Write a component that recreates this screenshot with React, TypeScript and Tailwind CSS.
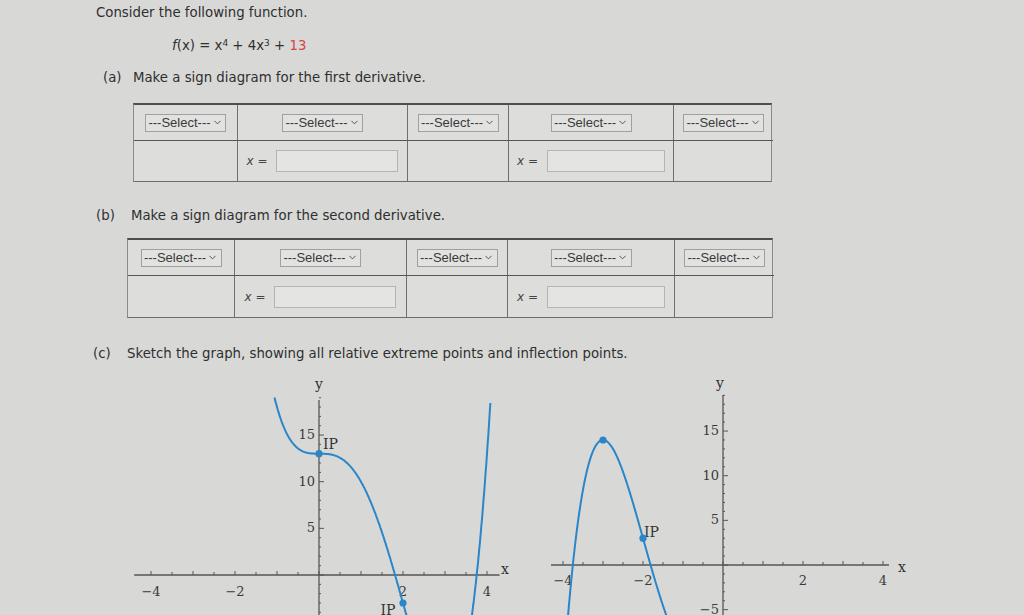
import { ChevronDown } from 'lucide-react';

const BLUE = '#2a86c8';

function Select() {
  return (
    <div className="flex h-[18px] w-[81px] items-center justify-center gap-[1px] border border-[#a0a0a0] bg-[#e2e2e0] font-['Liberation_Sans',Arial,sans-serif] text-[13px] leading-none text-[#3a3a3a]">
      <span>---Select---</span>
      <ChevronDown className="h-[11px] w-[11px]" strokeWidth={1.8} />
    </div>
  );
}

function XInput({ width }: { width: string }) {
  return (
    <div className="flex items-center gap-[9px] text-[12px] text-[#444]">
      <span>
        <span className="italic">x</span> =
      </span>
      <div className={`h-[22px] border border-[#b4b4b4] bg-[#e4e4e2] ${width}`} />
    </div>
  );
}

function SignTable({ grid, rowTwo }: { grid: string; rowTwo: string }) {
  const cells = [0, 1, 2, 3, 4];
  return (
    <div className={`grid border-t-2 border-b border-l border-r border-t-[#4d4d4d] border-b-[#6d6d6d] border-l-[#8a8a8a] border-r-[#8a8a8a] bg-[#dddedc] ${grid}`}>
      {cells.map((i) => (
        <div
          key={'a' + i}
          className={`flex h-[36px] items-center justify-center border-b border-b-[#555] ${i < 4 ? 'border-r border-r-[#6f6f6f]' : ''}`}
        >
          <Select />
        </div>
      ))}
      {cells.map((i) => (
        <div
          key={'b' + i}
          className={`flex items-center justify-center ${rowTwo} ${i < 4 ? 'border-r border-r-[#6f6f6f]' : ''}`}
        >
          {(i === 1 || i === 3) && <XInput width={i === 1 ? 'w-[122px]' : 'w-[118px]'} />}
        </div>
      ))}
    </div>
  );
}

function curve(fn: (x: number) => number, a: number, b: number, x0: number, y0: number, sx: number, sy: number) {
  const pts: string[] = [];
  for (let x = a; x <= b + 1e-9; x += 0.01) {
    pts.push(`${(x0 + x * sx).toFixed(1)},${(y0 - fn(x) * sy).toFixed(1)}`);
  }
  return 'M' + pts.join(' L');
}

function Axes({
  x0, y0, sx, sy, xFrom, xTo, yTop, yFrom, yLabels, xLabels, xLabelY,
}: {
  x0: number; y0: number; sx: number; sy: number; xFrom: number; xTo: number; yTop: number;
  yFrom: number; yLabels: number[]; xLabels: number[]; xLabelY: number;
}) {
  const xt: number[] = [];
  for (let v = Math.ceil(xFrom * 2) / 2; v <= xTo; v += 0.5) xt.push(v);
  const yt: number[] = [];
  for (let v = yFrom; v <= 19; v += 1) yt.push(v);
  return (
    <g stroke="#555" strokeWidth={1}>
      <line x1={x0 + xFrom * sx} y1={y0} x2={x0 + xTo * sx} y2={y0} strokeWidth={1.3} />
      <line x1={x0} y1={yTop} x2={x0} y2={270} strokeWidth={1.3} />
      {xt.map((v) => (
        <line key={'x' + v} x1={x0 + v * sx} y1={y0 - (Number.isInteger(v) ? 4 : 3)} x2={x0 + v * sx} y2={y0} />
      ))}
      {yt.map((v) => (
        <line key={'y' + v} x1={x0} y1={y0 - v * sy} x2={x0 + (v % 5 === 0 ? 5 : 2)} y2={y0 - v * sy} />
      ))}
      <g stroke="none" fill="#3a3a3a" fontFamily="'DejaVu Serif', 'Liberation Serif', serif" fontSize={13}>
        {yLabels.map((v) => (
          <text key={'yl' + v} x={x0 - 4} y={y0 - v * sy + 4} textAnchor="end">
            {v < 0 ? '\u2212' + -v : v}
          </text>
        ))}
        {xLabels.map((v) => (
          <text key={'xl' + v} x={x0 + v * sx} y={xLabelY} textAnchor="middle">
            {v < 0 ? '\u2212' + -v : v}
          </text>
        ))}
      </g>
    </g>
  );
}

function GraphOne() {
  const x0 = 199, y0 = 213, sx = 42, sy = 9.33;
  const f = (x: number) => x ** 4 - 4 * x ** 3 + 13;
  return (
    <svg width={410} height={260} className="block shrink-0">
      <Axes x0={x0} y0={y0} sx={sx} sy={sy} xFrom={-4.4} xTo={4.3} yTop={38} yFrom={-5} yLabels={[5, 10, 15]} xLabels={[-4, -2, 2, 4]} xLabelY={234} />
      <g fill="#333" fontFamily="'DejaVu Serif', 'Liberation Serif', serif" fontSize={14}>
        <text x={199} y={27} textAnchor="middle">y</text>
        <text x={381} y={212}>x</text>
        <text x={203} y={87}>IP</text>
        <text x={268} y={253} textAnchor="middle">IP</text>
      </g>
      <path d={curve(f, -1.06, 4.08, x0, y0, sx, sy)} fill="none" stroke={BLUE} strokeWidth={2} />
      <circle cx={x0} cy={y0 - 13 * sy} r={3.6} fill={BLUE} />
      <circle cx={x0 + 2 * sx} cy={y0 + 3 * sy} r={3.6} fill={BLUE} />
    </svg>
  );
}

function GraphTwo() {
  const x0 = 193, y0 = 203, sx = 40, sy = 8.93;
  const h = (x: number) => -(x ** 4) - 4 * x ** 3 - 13;
  return (
    <svg width={400} height={260} className="block shrink-0">
      <Axes x0={x0} y0={y0} sx={sx} sy={sy} xFrom={-4.3} xTo={4.15} yTop={33} yFrom={-6} yLabels={[-5, 5, 10, 15]} xLabels={[-4, -2, 2, 4]} xLabelY={223} />
      <g fill="#333" fontFamily="'DejaVu Serif', 'Liberation Serif', serif" fontSize={14}>
        <text x={190} y={26} textAnchor="middle">y</text>
        <text x={368} y={210}>x</text>
        <text x={114} y={175}>IP</text>
      </g>
      <path d={curve(h, -3.94, -1.2, x0, y0, sx, sy)} fill="none" stroke={BLUE} strokeWidth={2} />
      <circle cx={x0 - 3 * sx} cy={y0 - 14 * sy} r={3.6} fill={BLUE} />
      <circle cx={x0 - 2 * sx} cy={y0 - 3 * sy} r={3.6} fill={BLUE} />
    </svg>
  );
}

export default function App() {
  return (
    <div className="h-[615px] w-[1024px] overflow-hidden bg-[#d8d9d7] pl-[96px] pt-[5px] font-['DejaVu_Sans',Verdana,sans-serif] text-[13.3px] text-[#2f2f2f]">
      <p className="h-[16px] leading-[16px]">Consider the following function.</p>

      <p className="ml-[76px] mt-[17px] h-[16px] leading-[16px]">
        <span className="italic">f</span>(x) = x<sup className="text-[9px]">4</sup> + 4x<sup className="text-[9px]">3</sup> +{' '}
        <span className="text-[#d9434a]">13</span>
      </p>

      <div className="ml-[7px] mt-[16px] flex h-[16px] leading-[16px]">
        <span className="w-[30px]">(a)</span>
        <span>Make a sign diagram for the first derivative.</span>
      </div>

      <div className="ml-[37px] mt-[17px] w-[639px]">
        <SignTable grid="grid-cols-[104px_170px_101px_165px_99px]" rowTwo="h-[40px]" />
      </div>

      <div className="mt-[26px] flex h-[16px] leading-[16px]">
        <span className="w-[35px]">(b)</span>
        <span>Make a sign diagram for the second derivative.</span>
      </div>

      <div className="ml-[31px] mt-[14px] w-[646px]">
        <SignTable grid="grid-cols-[107px_172px_101px_167px_99px]" rowTwo="h-[41px]" />
      </div>

      <div className="-ml-[3px] mt-[28px] flex h-[16px] leading-[16px]">
        <span className="w-[34px]">(c)</span>
        <span>Sketch the graph, showing all relative extreme points and inflection points.</span>
      </div>

      <div className="ml-[24px] flex">
        <GraphOne />
        <GraphTwo />
      </div>
    </div>
  );
}
